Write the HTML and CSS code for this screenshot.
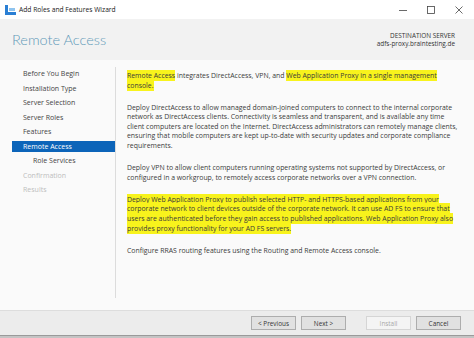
FILE: index.html
```html
<!DOCTYPE html>
<html lang="en">
<head>
    <meta charset="UTF-8">
    <meta name="viewport" content="width=device-width, initial-scale=1.0">
    <title>Add Roles and Features Wizard</title>
    <link rel="stylesheet" href="styles.css">
</head>
<body>

<div class="window">
    <div class="titlebar">
        <svg class="app-icon" width="11" height="10" viewBox="0 0 11 10">
            <rect x="0" y="0" width="3" height="10" fill="#2a7fd4"/>
            <rect x="0" y="7" width="11" height="3" fill="#2a7fd4"/>
            <rect x="4" y="3" width="6" height="3" fill="#8fc4ef"/>
        </svg>
        <span class="title">Add Roles and Features Wizard</span>
        <div class="controls">
            <svg width="10" height="10" viewBox="0 0 10 10"><line x1="1" y1="5.5" x2="9" y2="5.5" stroke="#444" stroke-width="0.8"/></svg>
            <svg width="10" height="10" viewBox="0 0 10 10"><rect x="1.5" y="1.5" width="7" height="7" fill="none" stroke="#444" stroke-width="0.8"/></svg>
            <svg width="10" height="10" viewBox="0 0 10 10"><path d="M1.5 1.5 L8.5 8.5 M8.5 1.5 L1.5 8.5" stroke="#444" stroke-width="0.8"/></svg>
        </div>
    </div>

    <div class="header">
        <h1>Remote Access</h1>
        <div class="dest">
            <div>DESTINATION SERVER</div>
            <div>adfs-proxy.braintesting.de</div>
        </div>
    </div>

    <div class="main">
        <ul class="nav">
            <li>Before You Begin</li>
            <li>Installation Type</li>
            <li>Server Selection</li>
            <li>Server Roles</li>
            <li>Features</li>
            <li class="active">Remote Access</li>
            <li class="sub">Role Services</li>
            <li class="disabled">Confirmation</li>
            <li class="disabled">Results</li>
        </ul>

        <div class="content">
            <p><mark>Remote Access</mark> integrates DirectAccess, VPN, and <mark>Web Application Proxy in a single management<br>console.</mark></p>
            <p>Deploy DirectAccess to allow managed domain-joined computers to connect to the internal corporate<br>network as DirectAccess clients. Connectivity is seamless and transparent, and is available any time<br>client computers are located on the Internet. DirectAccess administrators can remotely manage clients,<br>ensuring that mobile computers are kept up-to-date with security updates and corporate compliance<br>requirements.</p>
            <p>Deploy VPN to allow client computers running operating systems not supported by DirectAccess, or<br>configured in a workgroup, to remotely access corporate networks over a VPN connection.</p>
            <p><mark>Deploy Web Application Proxy to publish selected HTTP- and HTTPS-based applications from your<br>corporate network to client devices outside of the corporate network. It can use AD FS to ensure that<br>users are authenticated before they gain access to published applications. Web Application Proxy also<br>provides proxy functionality for your AD FS servers.</mark></p>
            <p>Configure RRAS routing features using the Routing and Remote Access console.</p>
        </div>
    </div>

    <div class="footer">
        <button>&lt; Previous</button>
        <button>Next &gt;</button>
        <button class="gap" disabled>Install</button>
        <button>Cancel</button>
    </div>
</div>

</body>
</html>
```

FILE: styles.css
```css
body {
    margin: 0;
    font-family: "Open Sans", "Noto Sans", sans-serif;
    background-color: #c4c4c4;
    color: #333;
}

.window {
    width: 474px;
    height: 335px;
    display: flex;
    flex-direction: column;
    background-color: #fafafa;
    border-bottom: 1px solid #9a9a9a;
}

.titlebar {
    height: 19px;
    background-color: #fff;
    display: flex;
    align-items: center;
    padding-left: 5px;
}

.app-icon {
    margin-right: 3px;
}

.title {
    font-size: 6.7px;
    color: #222;
}

.controls {
    margin-left: auto;
    display: flex;
    gap: 18px;
    padding-right: 10px;
}

.header {
    height: 41px;
    background-color: #f2f2f2;
    display: flex;
    justify-content: space-between;
    align-items: center;
    padding: 0 19px 0 12px;
}

h1 {
    margin: 0;
    font-family: Lato, "Open Sans", sans-serif;
    font-size: 14.5px;
    font-weight: 300;
    color: #6199b8;
}

.dest {
    text-align: right;
    font-size: 6.4px;
    line-height: 8px;
    color: #333;
}

.main {
    flex: 1;
    display: flex;
    padding: 7px 0 12px;
}

.nav {
    list-style: none;
    margin: 0;
    padding: 1px 0 0;
    width: 115px;
    border-right: 1px solid #dcdcdc;
    font-size: 7px;
}

.nav li {
    height: 11px;
    line-height: 11px;
    margin-bottom: 3.5px;
    margin-left: 12px;
    padding-left: 11px;
    color: #444;
}

.nav li.active {
    background-color: #0c64b9;
    color: #fff;
}

.nav li.sub {
    padding-left: 21px;
}

.nav li.disabled {
    color: #bdbdbd;
}

.content {
    padding: 4px 0 0 11px;
    font-size: 6.9px;
    line-height: 9.6px;
    color: #3a3a3a;
    white-space: nowrap;
}

.content p {
    margin: 0 0 12.5px;
}

mark {
    background-color: #f8f31c;
    color: #3a3a3a;
    padding: 1px 0;
}

.footer {
    height: 24px;
    background-color: #ececec;
    border-top: 1px solid #dddddd;
    display: flex;
    align-items: center;
    justify-content: flex-end;
    padding-right: 13px;
    gap: 5px;
}

.footer button {
    width: 45px;
    height: 14px;
    padding: 0;
    font-family: inherit;
    font-size: 6.4px;
    color: #333;
    background-color: #e1e1e1;
    border: 1px solid #adadad;
}

.footer button.gap {
    margin-left: 15px;
}

.footer button:disabled {
    background-color: #f4f4f4;
    border-color: #d5d5d5;
    color: #a8a8a8;
}
```
